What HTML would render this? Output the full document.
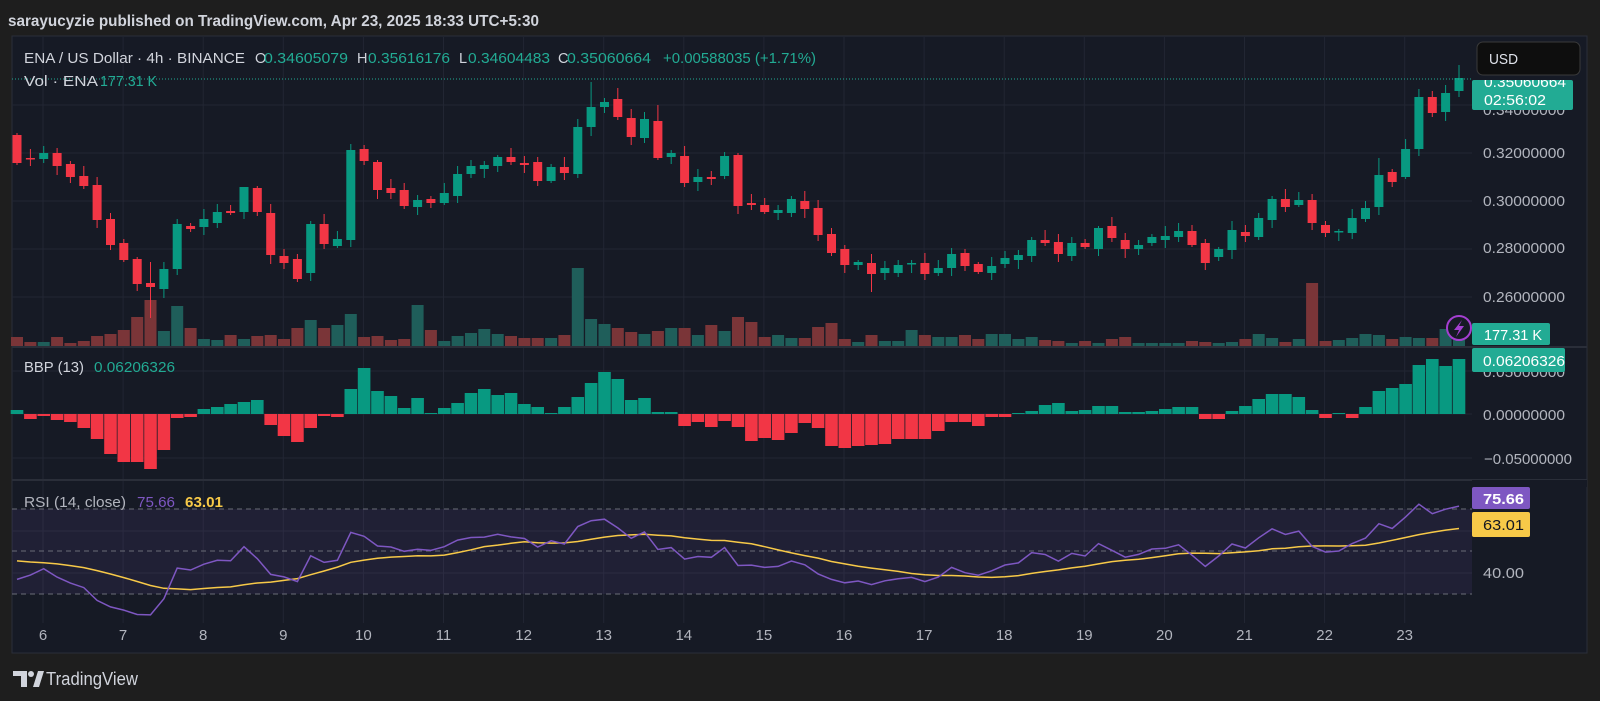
<!DOCTYPE html>
<html><head><meta charset="utf-8"><style>
html,body{margin:0;padding:0;background:#1e1e1e;width:1600px;height:701px;overflow:hidden}
svg{display:block}
text{font-family:"Liberation Sans",sans-serif}
</style></head><body>
<svg id="s" width="1600" height="701" viewBox="0 0 1600 701" xmlns="http://www.w3.org/2000/svg">
<defs><clipPath id="pc"><rect x="1472" y="80" width="101" height="30"/></clipPath></defs>
<rect width="1600" height="701" fill="#1e1e1e"/>
<text x="8" y="26" font-size="15.5" font-weight="bold" fill="#d1d4dc" textLength="531" lengthAdjust="spacingAndGlyphs">sarayucyzie published on TradingView.com, Apr 23, 2025 18:33 UTC+5:30</text>
<rect x="12" y="36" width="1575" height="617" fill="#161a25" stroke="#2a2e39" stroke-width="1"/>
<g id="grid" stroke="#222633" stroke-width="1"></g>
<line x1="12" y1="347" x2="1587" y2="347" stroke="#2a2e39" stroke-width="2"/>
<line x1="12" y1="480" x2="1587" y2="480" stroke="#2a2e39" stroke-width="2"/>
<rect x="12" y="509" width="1460" height="85" fill="rgba(126,87,194,0.10)"/>
<g stroke="#6a6d78" stroke-dasharray="5,4" stroke-width="1">
<line x1="12" y1="509" x2="1472" y2="509"/><line x1="12" y1="551" x2="1472" y2="551"/><line x1="12" y1="594" x2="1472" y2="594"/>
</g>
<g id="vol"></g>
<g id="bbp"></g>
<g id="candles"></g>
<g id="rsi"></g>
<line x1="12" y1="79" x2="1472" y2="79" stroke="#22ab94" stroke-dasharray="1,2" stroke-width="1"/>
<text y="63" font-size="14.5">
<tspan x="24" fill="#d1d4dc" textLength="221" lengthAdjust="spacingAndGlyphs">ENA / US Dollar · 4h · BINANCE</tspan>
</text>
<text y="63" font-size="14.5" fill="#d1d4dc"><tspan x="255">O</tspan><tspan x="357">H</tspan><tspan x="459">L</tspan><tspan x="558">C</tspan></text>
<text y="63" font-size="14.5" fill="#22ab94">
<tspan x="264" textLength="84" lengthAdjust="spacingAndGlyphs">0.34605079</tspan>
<tspan x="368" textLength="82" lengthAdjust="spacingAndGlyphs">0.35616176</tspan>
<tspan x="468" textLength="82" lengthAdjust="spacingAndGlyphs">0.34604483</tspan>
<tspan x="567" textLength="84" lengthAdjust="spacingAndGlyphs">0.35060664</tspan>
<tspan x="663" textLength="153" lengthAdjust="spacingAndGlyphs">+0.00588035 (+1.71%)</tspan>
</text>
<text x="24" y="86" font-size="14.5" fill="#d1d4dc" textLength="74" lengthAdjust="spacingAndGlyphs">Vol · ENA</text>
<text x="100" y="86" font-size="14.5" fill="#22ab94" textLength="57" lengthAdjust="spacingAndGlyphs">177.31 K</text>
<text x="24" y="372" font-size="14.5" fill="#d1d4dc" textLength="60" lengthAdjust="spacingAndGlyphs">BBP (13)</text>
<text x="94" y="372" font-size="14.5" fill="#22ab94" textLength="81" lengthAdjust="spacingAndGlyphs">0.06206326</text>
<text x="24" y="507" font-size="14.5" fill="#b2b5be" textLength="102" lengthAdjust="spacingAndGlyphs">RSI (14, close)</text>
<text x="137" y="507" font-size="14.5" fill="#7e57c2" textLength="38" lengthAdjust="spacingAndGlyphs">75.66</text>
<text x="185" y="507" font-size="14.5" fill="#f7c948" font-weight="bold" textLength="38" lengthAdjust="spacingAndGlyphs">63.01</text>
<g font-size="15" fill="#b2b5be">
<text x="1483" y="115" textLength="82" lengthAdjust="spacingAndGlyphs">0.34000000</text>
<text x="1483" y="158" textLength="82" lengthAdjust="spacingAndGlyphs">0.32000000</text>
<text x="1483" y="206" textLength="82" lengthAdjust="spacingAndGlyphs">0.30000000</text>
<text x="1483" y="253" textLength="82" lengthAdjust="spacingAndGlyphs">0.28000000</text>
<text x="1483" y="302" textLength="82" lengthAdjust="spacingAndGlyphs">0.26000000</text>
<text x="1483" y="377" textLength="82" lengthAdjust="spacingAndGlyphs">0.05000000</text>
<text x="1483" y="420" textLength="82" lengthAdjust="spacingAndGlyphs">0.00000000</text>
<text x="1484" y="464" textLength="88" lengthAdjust="spacingAndGlyphs">−0.05000000</text>
<text x="1483" y="492" textLength="41" lengthAdjust="spacingAndGlyphs">80.00</text>
<text x="1483" y="578" textLength="41" lengthAdjust="spacingAndGlyphs">40.00</text>
</g>
<rect x="1472" y="480" width="115" height="7" fill="#161a25"/>
<rect x="1472" y="80" width="101" height="30" rx="2" fill="#22ab94"/>
<text x="1484" y="87" font-size="15" fill="#ffffff" textLength="82" lengthAdjust="spacingAndGlyphs" clip-path="url(#pc)">0.35060664</text>
<text x="1484" y="105" font-size="15" fill="#ffffff" textLength="62" lengthAdjust="spacingAndGlyphs">02:56:02</text>
<rect x="1477" y="42" width="103" height="33" rx="6" fill="#0e0e0e" stroke="#3a3a3a"/>
<text x="1489" y="64" font-size="15" fill="#e0e3eb" textLength="29" lengthAdjust="spacingAndGlyphs">USD</text>
<rect x="1472" y="323" width="78" height="22" rx="2" fill="#22ab94"/>
<text x="1484" y="340" font-size="15" fill="#fff" textLength="58" lengthAdjust="spacingAndGlyphs">177.31 K</text>
<circle cx="1459" cy="328" r="12" fill="#161a25" stroke="#a43fd1" stroke-width="2"/>
<path d="M1462 320 L1454 330 L1459 330 L1456 337 L1464 326 L1459 326 Z" fill="#a43fd1"/>
<rect x="1472" y="348" width="93" height="24" rx="2" fill="#22ab94"/>
<text x="1483" y="366" font-size="15" fill="#fff" textLength="82" lengthAdjust="spacingAndGlyphs">0.06206326</text>
<rect x="1472" y="487" width="58" height="22" rx="2" fill="#7e57c2"/>
<text x="1483" y="504" font-size="15" fill="#fff" font-weight="bold" textLength="41" lengthAdjust="spacingAndGlyphs">75.66</text>
<rect x="1472" y="512" width="58" height="25" rx="2" fill="#f7c948"/>
<text x="1483" y="530" font-size="15" fill="#131722" textLength="41" lengthAdjust="spacingAndGlyphs">63.01</text>
<g id="time" font-size="15" fill="#b2b5be" text-anchor="middle"></g>
<path d="M13 671 H27 V687 H21 V676 H13 Z" fill="#d1d4dc"/>
<circle cx="31" cy="674" r="3" fill="#d1d4dc"/>
<path d="M33 687 L38 671 H44 L39 687 Z" fill="#d1d4dc"/>
<text x="46" y="685" font-size="18" fill="#d1d4dc" textLength="92" lengthAdjust="spacingAndGlyphs">TradingView</text>
</svg>
<script>
(function(){
var NS="http://www.w3.org/2000/svg";
function el(g,t,a){var e=document.createElementNS(NS,t);for(var k in a)e.setAttribute(k,a[k]);document.getElementById(g).appendChild(e);return e;}
var C=[[135,163],[158,159],[159,153],[153,166],[164,177],[176,186],[185,220],[219,245],[243,260],[259,284],[283,287],[289,269],[269,224],[226,229],[227,219],[223,212],[211,213],[212,187],[188,212],[213,255],[256,263],[259,279],[273,224],[224,244],[246,239],[240,150],[149,161],[162,190],[188,193],[190,206],[207,200],[199,203],[203,193],[196,174],[174,166],[169,165],[166,157],[157,162],[163,165],[162,181],[181,167],[167,173],[174,127],[127,107],[107,102],[99,117],[118,137],[138,119],[121,158],[157,153],[156,183],[182,177],[177,179],
[176,156],[155,206],[203,205],[205,212],[213,210],[213,199],[201,209],[208,235],[234,253],[249,265],[265,262],[263,274],[273,268],[273,265],[264,263],[263,274],[273,268],[268,254],[253,266],[264,272],[273,266],[264,258],[260,255],[256,240],[240,243],[242,254],[256,243],[243,247],[249,228],[226,238],[240,249],[249,245],[243,237],[240,236],[237,231],[231,245],[243,263],[257,249],[250,230],[232,236],[237,218],[220,199],[199,207],[205,200],[200,223],[225,233],[232,231],[233,218],[219,208],[207,175],[172,182],[177,149],[149,97],[97,113],[112,93],[91,78]];
var V=[9,4,4,9,3,5,10,12,16,29,46,15,40,18,7,6,11,7,10,11,7,18,26,18,21,32,9,10,6,7,41,16,5,10,13,17,12,10,8,8,8,11,78,27,22,18,14,12,15,18,18,11,21,
15,29,24,9,11,8,8,19,23,7,4,11,5,5,16,11,9,9,11,7,12,12,7,9,6,5,3,5,3,7,9,3,3,3,3,5,4,3,4,7,12,8,4,7,63,5,6,8,12,11,7,9,8,8,17,6];
var B=[4,-5,-2,-6,-8,-14,-25,-40,-48,-48,-55,-36,-4,-3,5,7,10,12,14,-11,-22,-28,-14,-2,-3,25,46,23,18,6,16,1,6,11,21,25,19,21,10,7,1,7,17,31,42,35,14,16,2,2,-12,-8,-13,
-7,-13,-27,-24,-26,-19,-9,-14,-32,-34,-32,-31,-30,-25,-25,-25,-17,-8,-8,-12,-3,-3,1,3,9,11,3,4,8,8,2,2,3,5,7,7,-5,-5,3,8,15,20,20,17,4,-4,1,-4,7,23,26,30,49,55,48,55];
var N=C.length,x0=17,st=(1459-17)/(N-1);
for(var d=6;d<=23;d++){var gx=43+(d-6)*80.1;el("grid","line",{x1:gx,y1:37,x2:gx,y2:623});var t=el("time","text",{x:gx,y:640});t.textContent=d;}
[105,153,201,249,297,371,414,458,531,573].forEach(function(y){el("grid","line",{x1:12,y1:y,x2:1472,y2:y});});
var G="#089981",R="#f23645";
for(var i=0;i<N;i++){
 var x=x0+i*st,o=C[i][0],c=C[i][1],up=c<o||(c==o&&i%2==0),col=up?G:R;
 var bt=Math.min(o,c),bb=Math.max(o,c),h=Math.max(bb-bt,1.5);
 var hi=bt-(2+(i*7)%9),lo=bb+(2+(i*5)%8);
 if(i==10){hi=262;lo=318;} if(i==17)hi=189; if(i==43)hi=82; if(i==45)hi=88; if(i==48)hi=105;if(i==64)lo=292;if(i==108)hi=65;if(i==107)hi=85;if(i==102)hi=158;
 el("candles","line",{x1:x.toFixed(1),y1:hi,x2:x.toFixed(1),y2:lo,stroke:col,"stroke-width":1});
 el("candles","rect",{x:(x-4.5).toFixed(1),y:bt,width:9,height:h,fill:col});
 var v=V[i]||5;
 el("vol","rect",{x:(x-6).toFixed(1),y:346-v,width:12,height:v,fill:up?"#1f5e5a":"#7a3538"});
 var b=B[i]!==undefined?B[i]:55;
 el("bbp","rect",{x:(x-6.3).toFixed(1),y:b>0?414-b:414,width:12.6,height:Math.max(Math.abs(b),1),fill:b>=0?G:R});
}
var ag=3,al=3.6,prev=135,rs=[];
for(i=0;i<N;i++){var ch=prev-C[i][1];prev=C[i][1];ag=(ag*13+Math.max(ch,0))/14;al=(al*13+Math.max(-ch,0))/14;rs.push(50+(50-100/(1+ag/al))*0.85);}
var pr="",pm="";
for(i=0;i<N;i++){var xx=x0+i*st;var s=0;for(var k=i-13;k<=i;k++)s+=(k<0?46:rs[k]);var m=s/14;
 pr+=(i?"L":"M")+xx.toFixed(1)+" "+(551-(rs[i]-50)*2.125).toFixed(1);
 pm+=(i?"L":"M")+xx.toFixed(1)+" "+(551-(m-50)*2.125).toFixed(1);}
el("rsi","path",{d:pm,fill:"none",stroke:"#f7c948","stroke-width":1.5});
el("rsi","path",{d:pr,fill:"none",stroke:"#7e57c2","stroke-width":1.5});
})();
</script>
</body></html>
